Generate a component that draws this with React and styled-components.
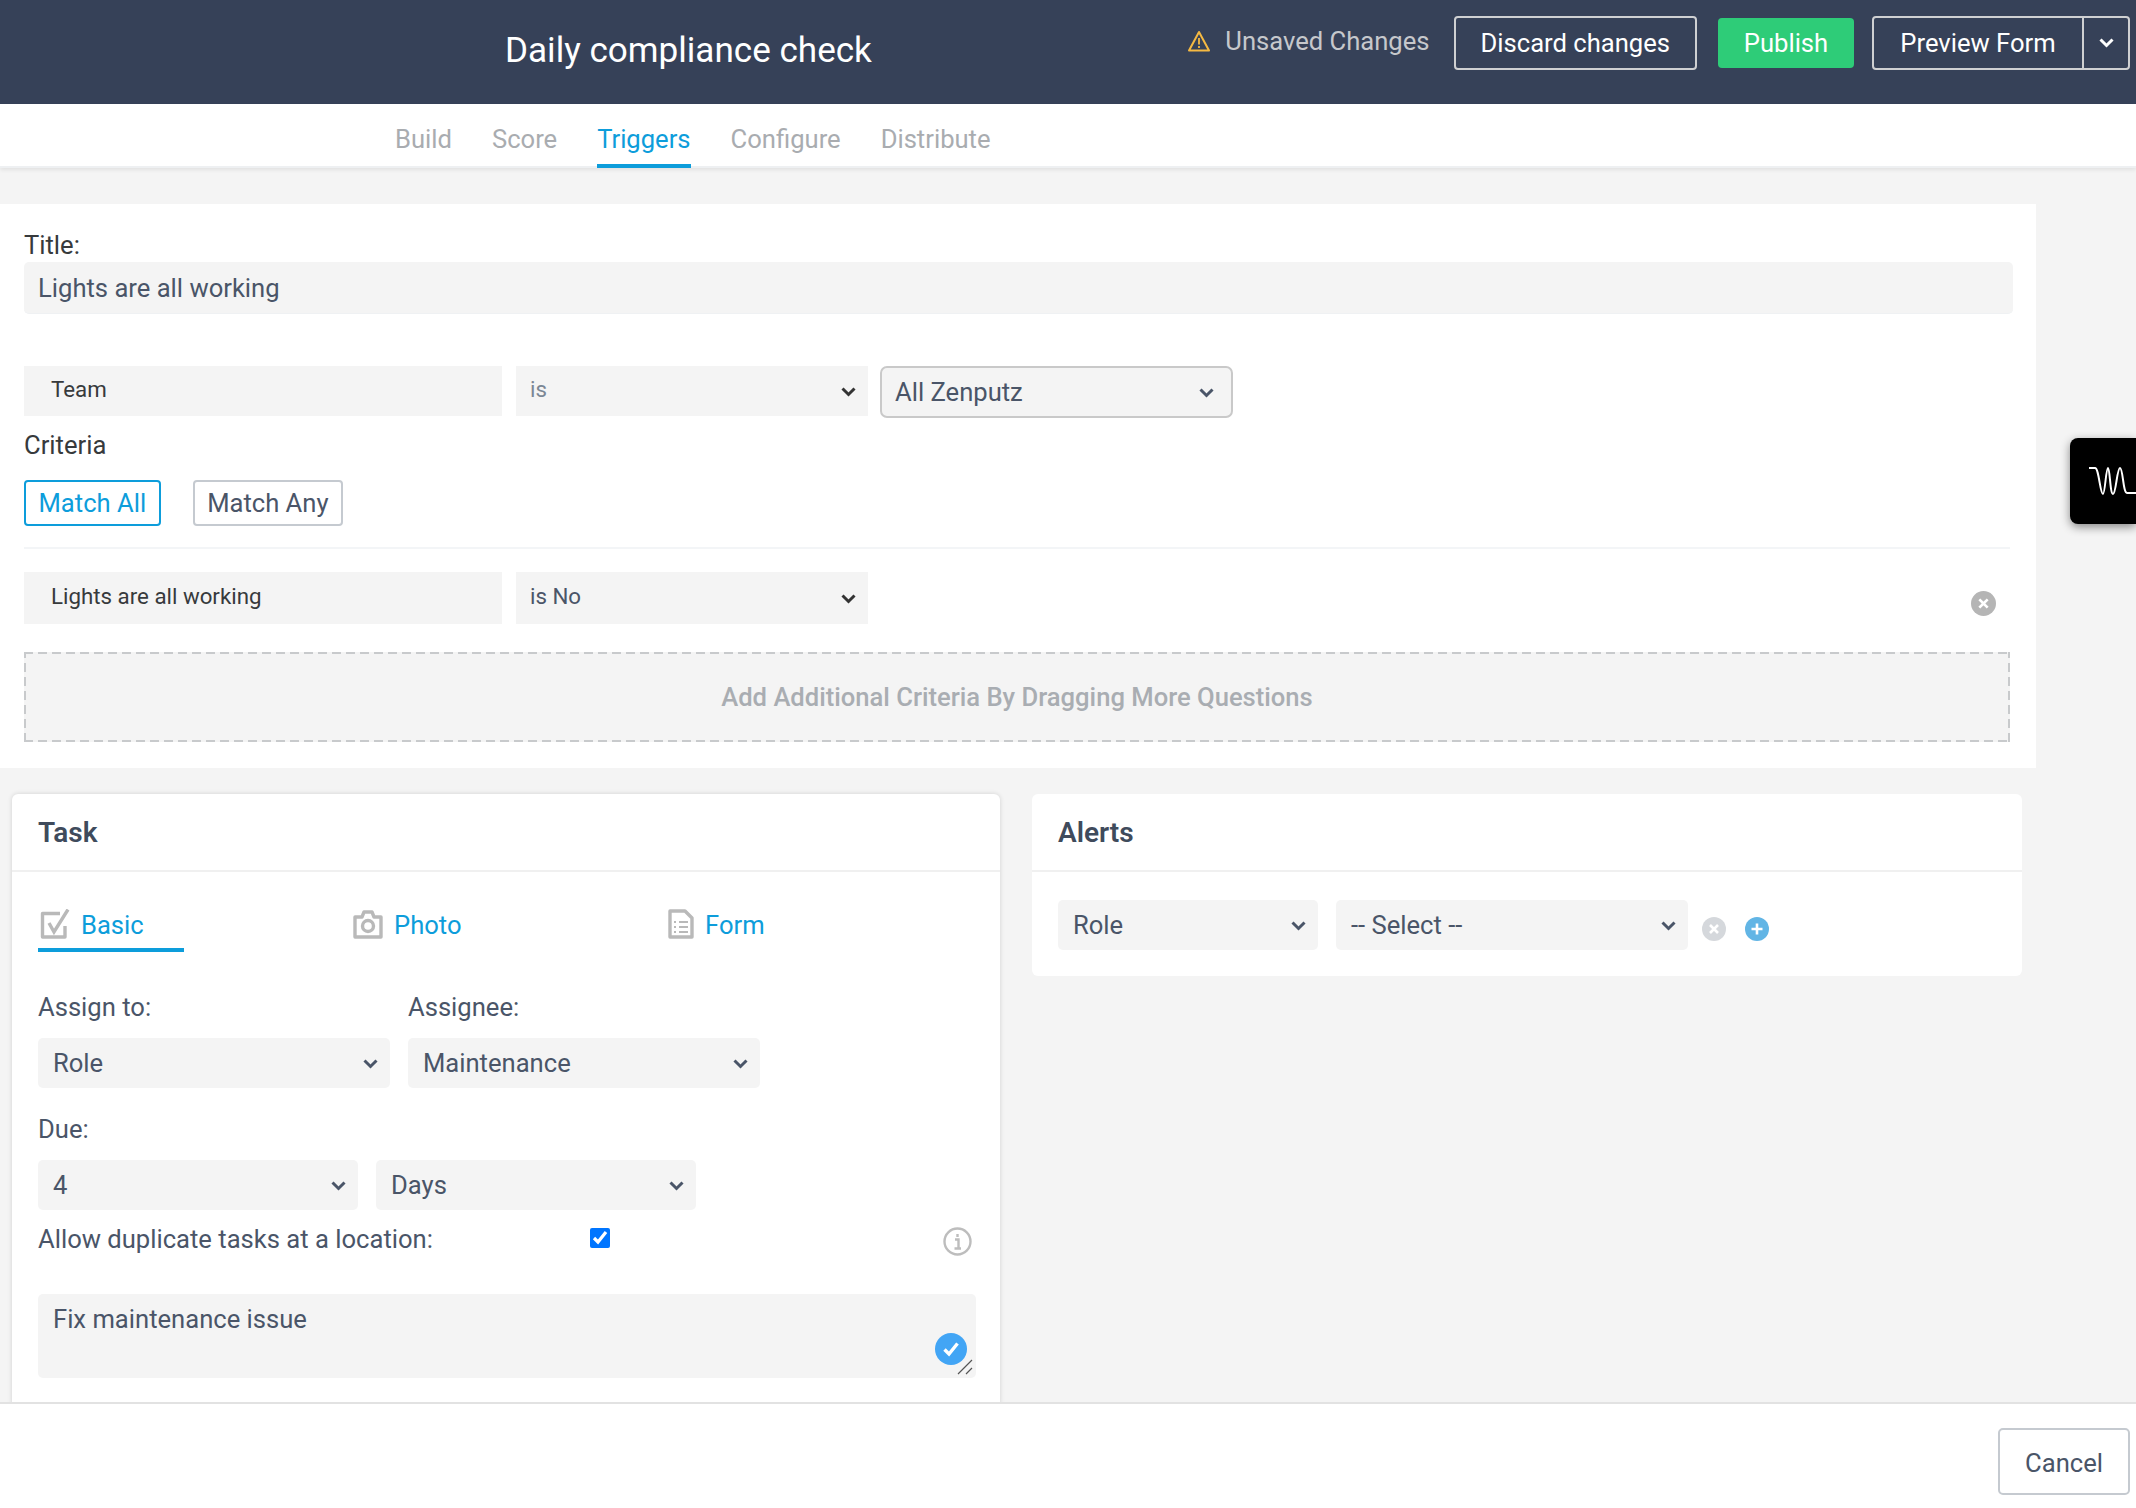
import React from "react";
import styled, { createGlobalStyle } from "styled-components";

const GlobalStyle = createGlobalStyle`
  html, body {
    margin: 0;
    padding: 0;
    background: #f4f4f4;
  }
  * {
    box-sizing: border-box;
  }
`;

const font = `Roboto, "Liberation Sans", sans-serif`;
const blue = "#0d9ddb";
const slate = "#4a5568";
const dash = "#c8cacc";

const Page = styled.div`
  position: relative;
  width: 2136px;
  height: 1508px;
  display: flex;
  flex-direction: column;
  overflow: hidden;
  background: #f4f4f4;
  font-family: ${font};
  font-size: 25.6px;
  color: ${slate};
`;

const Header = styled.header`
  flex: none;
  height: 104px;
  display: flex;
  align-items: flex-start;
  padding: 0 6px 0 505px;
  background: #364158;
`;

const FormName = styled.h1`
  margin: 0;
  font-size: 35.1px;
  font-weight: 400;
  line-height: 100px;
  color: #fff;
`;

const Actions = styled.div`
  margin: 16px 0 0 auto;
  display: flex;
  align-items: center;
  height: 54px;
`;

const Unsaved = styled.span`
  display: flex;
  align-items: center;
  gap: 15px;
  margin: 0 24px 0 0;
  color: #c6c8cc;
  line-height: 30px;
  padding-bottom: 4px;
`;

const GhostButton = styled.button`
  height: 54px;
  padding: 0 25px;
  margin: 0;
  border: 2px solid #cfd0d2;
  border-radius: 4px;
  background: transparent;
  color: #fff;
  font: inherit;
`;

const PublishButton = styled.button`
  height: 50px;
  width: 136px;
  margin: 0 18px 0 21px;
  border: 0;
  border-radius: 4px;
  background: #2ecc78;
  color: #fff;
  font: inherit;
`;

const SplitButton = styled.div`
  display: flex;
  height: 54px;
  border: 2px solid #cfd0d2;
  border-radius: 4px;
  color: #fff;
`;

const SplitLabel = styled.span`
  width: 210px;
  display: flex;
  align-items: center;
  justify-content: center;
  border-right: 2px solid #cfd0d2;
`;

const SplitCaret = styled.span`
  width: 44px;
  display: flex;
  align-items: center;
  justify-content: center;
`;

const TabBar = styled.nav`
  position: relative;
  z-index: 1;
  flex: none;
  height: 64px;
  display: flex;
  gap: 40px;
  padding-left: 395px;
  background: #fff;
  border-bottom: 2px solid #eef0f2;
  box-shadow: 0 2px 4px rgba(0, 0, 0, 0.08);
`;

const TopTab = styled.a`
  height: 64px;
  display: flex;
  align-items: center;
  color: ${(p) => (p.$active ? blue : "#a9acb0")};
  border-bottom: 4px solid ${(p) => (p.$active ? blue : "transparent")};
  padding-top: 10px;
`;

const Main = styled.main`
  flex: 1;
  min-height: 0;
  overflow: hidden;
  padding-top: 36px;
`;

const TriggerCard = styled.section`
  width: 2036px;
  padding: 26px 26px 26px 24px;
  background: #fff;
`;

const FieldLabel = styled.div`
  line-height: 30px;
  color: #373a3c;
`;

const TitleInput = styled.input`
  display: block;
  width: calc(100% + 3px);
  height: 52px;
  margin-top: 2px;
  padding: 0 14px;
  border: 0;
  border-bottom: 1px solid #eff1f3;
  border-radius: 5px;
  background: #f4f4f4;
  color: ${slate};
  font: inherit;
  outline: none;
`;

const ConditionRow = styled.div`
  display: flex;
  align-items: flex-start;
  gap: 14px;
  margin-top: ${(p) => p.$top || 0}px;
`;

const QuestionBox = styled.div`
  flex: none;
  width: 478px;
  height: ${(p) => p.$height}px;
  display: flex;
  align-items: center;
  padding: 0 0 4px 27px;
  background: #f4f4f4;
  color: #373a3c;
  font-size: 22.3px;
`;

const SelectWrap = styled.div`
  position: relative;
  flex: none;
  width: ${(p) => p.$width}px;
  height: ${(p) => p.$height || 50}px;
  margin-left: ${(p) => p.$left || 0}px;
`;

const Select = styled.select`
  appearance: none;
  display: block;
  width: 100%;
  height: 100%;
  padding: ${(p) =>
    p.$small ? "0 34px 4px 14px" : p.$outlined ? "0 34px 0 13px" : "0 34px 0 15px"};
  border: ${(p) => (p.$outlined ? "2px solid #c9c9c9" : "0")};
  border-radius: ${(p) => (p.$small ? "0" : p.$outlined ? "7px" : "5px")};
  background: #f4f4f4;
  color: ${(p) => p.$color || slate};
  font-family: ${font};
  font-size: ${(p) => (p.$small ? "22.3px" : "25.6px")};
  outline: none;
`;

const Caret = styled.svg`
  display: block;
  width: 15px;
  height: 10px;
  fill: none;
  stroke: ${(p) => p.$color || slate};
  stroke-width: 3;
`;

const SelectCaret = styled(Caret)`
  position: absolute;
  top: 50%;
  right: ${(p) => (p.$outlined ? 19 : 12)}px;
  margin-top: -4px;
  pointer-events: none;
`;

const MatchRow = styled.div`
  display: flex;
  gap: 32px;
  margin-top: 20px;
`;

const MatchButton = styled.button`
  height: 46px;
  padding: 0 12.5px;
  border: 2px solid ${(p) => (p.$active ? blue : "#c5cad0")};
  border-radius: 4px;
  background: #fff;
  color: ${(p) => (p.$active ? blue : slate)};
  font: inherit;
`;

const Separator = styled.hr`
  height: 2px;
  margin: 21px 0 0;
  border: 0;
  background: #f3f5f7;
`;

const RemoveSlot = styled.span`
  margin: 19px 14px 0 auto;
  display: flex;
`;

const DropZone = styled.div`
  height: 90px;
  margin-top: 28px;
  display: flex;
  align-items: center;
  justify-content: center;
  background-color: #f4f4f4;
  background-image:
    repeating-linear-gradient(90deg, ${dash} 0 9px, transparent 9px 14px),
    repeating-linear-gradient(90deg, ${dash} 0 9px, transparent 9px 14px),
    repeating-linear-gradient(0deg, ${dash} 0 9px, transparent 9px 14px),
    repeating-linear-gradient(0deg, ${dash} 0 9px, transparent 9px 14px);
  background-size: 100% 2px, 100% 2px, 2px 100%, 2px 100%;
  background-position: 0 0, 0 100%, 0 0, 100% 0;
  background-repeat: no-repeat;
  color: #a9adb2;
  font-size: 25.6px;
  font-weight: 500;
`;

const Columns = styled.div`
  display: flex;
  align-items: flex-start;
  gap: 32px;
  padding: 26px 0 0 12px;
`;

const Panel = styled.section`
  flex: none;
  width: ${(p) => p.$width}px;
  background: #fff;
  border-radius: 6px;
  box-shadow: ${(p) => (p.$raised ? "0 0 5px rgba(0, 0, 0, 0.14)" : "none")};
`;

const PanelHead = styled.h2`
  margin: 0;
  height: 78px;
  padding: 1px 26px 0;
  display: flex;
  align-items: center;
  border-bottom: 2px solid #f0f0f0;
  font-size: 28px;
  font-weight: 600;
  color: #3f4b5c;
`;

const TaskBody = styled.div`
  padding: 28px 24px 30px 26px;
`;

const TaskTabs = styled.div`
  display: grid;
  grid-template-columns: 315px 315px 1fr;
`;

const TaskTab = styled.a`
  display: flex;
  align-items: center;
  gap: 11px;
  width: ${(p) => (p.$active ? "146px" : "auto")};
  height: 52px;
  padding: 2px 0 0 ${(p) => p.$pad}px;
  color: ${blue};
  border-bottom: 4px solid ${(p) => (p.$active ? blue : "transparent")};
`;

const TabIcon = styled.svg`
  flex: none;
  width: ${(p) => p.$w}px;
  height: 30px;
  margin-top: -2px;
  fill: none;
  stroke: #b9b9b9;
  stroke-width: 3.4;
`;

const FieldGrid = styled.div`
  display: grid;
  grid-template-columns: ${(p) => p.$cols};
  column-gap: 18px;
  margin-top: ${(p) => p.$top}px;
`;

const SmallLabel = styled.label`
  display: block;
  line-height: 30px;
  margin-bottom: 16px;
`;

const AllowRow = styled.div`
  display: flex;
  align-items: center;
  height: 30px;
  margin-top: 14px;
  padding-right: 4px;
`;

const AllowLabel = styled.label`
  flex: none;
  width: 552px;
`;

const Tick = styled.input`
  width: 20px;
  height: 20px;
  margin: -3px 0 0;
`;

const InfoSlot = styled.span`
  display: flex;
  margin: 4px 0 0 auto;
`;

const NoteWrap = styled.div`
  position: relative;
  height: 84px;
  margin-top: 40px;
`;

const Note = styled.textarea`
  display: block;
  width: 100%;
  height: 100%;
  padding: 10px 15px;
  border: 0;
  border-radius: 5px;
  background: #f4f4f4;
  color: ${slate};
  font: inherit;
  line-height: 30px;
  outline: none;
  resize: none;
`;

const NoteCheck = styled.svg`
  position: absolute;
  right: 8px;
  bottom: 12px;
  width: 34px;
  height: 34px;
`;

const NoteGrip = styled.svg`
  position: absolute;
  right: 3px;
  bottom: 3px;
  width: 16px;
  height: 16px;
`;

const AlertRow = styled.div`
  display: flex;
  align-items: flex-start;
  gap: 18px;
  padding: 28px 26px 26px;
`;

const RoundButtons = styled.div`
  display: flex;
  gap: 19px;
  margin: 17px 0 0 -4px;
`;

const Footer = styled.footer`
  flex: none;
  height: 106px;
  display: flex;
  justify-content: flex-end;
  align-items: flex-start;
  padding: 24px 6px 0 0;
  background: #fff;
  border-top: 2px solid #e2e2e2;
`;

const CancelButton = styled.button`
  width: 132px;
  height: 67px;
  padding-top: 3px;
  border: 2px solid #c5cad0;
  border-radius: 5px;
  background: #fff;
  color: ${slate};
  font: inherit;
`;

const WaveTab = styled.aside`
  position: absolute;
  top: 438px;
  right: 0;
  width: 66px;
  height: 86px;
  padding: 28px 0 0 19px;
  overflow: hidden;
  background: #000;
  border-radius: 8px 0 0 8px;
  box-shadow: 0 3px 10px rgba(0, 0, 0, 0.45);
`;

const chevron = "M1.5 1.5 L7.5 7.5 L13.5 1.5";

const DropSelect = ({ value, width, height, color, caret, small, outlined, left }) => (
  <SelectWrap $width={width} $height={height} $left={left}>
    <Select defaultValue={value} $color={color} $small={small} $outlined={outlined}>
      <option>{value}</option>
    </Select>
    <SelectCaret viewBox="0 0 15 10" $color={caret} $outlined={outlined}>
      <path d={chevron} />
    </SelectCaret>
  </SelectWrap>
);

const CrossDot = ({ size, color }) => (
  <svg width={size} height={size} viewBox="0 0 24 24">
    <circle cx="12" cy="12" r="12" fill={color} />
    <path d="M8 8 L16 16 M16 8 L8 16" stroke="#fff" strokeWidth="2.6" />
  </svg>
);

const App = () => (
  <Page>
    <GlobalStyle />
    <Header>
      <FormName>Daily compliance check</FormName>
      <Actions>
        <Unsaved>
          <svg width="22" height="22" viewBox="0 0 22 22" fill="none">
            <path
              d="M11 2 L21 20.5 H1 Z"
              stroke="#f5b942"
              strokeWidth="2"
              strokeLinejoin="round"
            />
            <path d="M11 8 V14.5 M11 16 V18" stroke="#f5b942" strokeWidth="1.8" />
          </svg>
          Unsaved Changes
        </Unsaved>
        <GhostButton>Discard changes</GhostButton>
        <PublishButton>Publish</PublishButton>
        <SplitButton>
          <SplitLabel>Preview Form</SplitLabel>
          <SplitCaret>
            <Caret viewBox="0 0 15 10" $color="#fff">
              <path d={chevron} />
            </Caret>
          </SplitCaret>
        </SplitButton>
      </Actions>
    </Header>

    <TabBar>
      <TopTab>Build</TopTab>
      <TopTab>Score</TopTab>
      <TopTab $active>Triggers</TopTab>
      <TopTab>Configure</TopTab>
      <TopTab>Distribute</TopTab>
    </TabBar>

    <Main>
      <TriggerCard>
        <FieldLabel>Title:</FieldLabel>
        <TitleInput defaultValue="Lights are all working" />

        <ConditionRow $top={52}>
          <QuestionBox $height={50}>Team</QuestionBox>
          <DropSelect value="is" width={352} color="#7b8794" caret="#333" small />
          <DropSelect value="All Zenputz" width={353} height={52} left={-2} outlined />
        </ConditionRow>

        <FieldLabel style={{ marginTop: 12 }}>Criteria</FieldLabel>
        <MatchRow>
          <MatchButton $active>Match All</MatchButton>
          <MatchButton>Match Any</MatchButton>
        </MatchRow>
        <Separator />

        <ConditionRow $top={23}>
          <QuestionBox $height={52}>Lights are all working</QuestionBox>
          <DropSelect value="is No" width={352} height={52} caret="#333" small />
          <RemoveSlot>
            <CrossDot size={25} color="#b5b5b5" />
          </RemoveSlot>
        </ConditionRow>

        <DropZone>Add Additional Criteria By Dragging More Questions</DropZone>
      </TriggerCard>

      <Columns>
        <Panel $width={988} $raised>
          <PanelHead>Task</PanelHead>
          <TaskBody>
            <TaskTabs>
              <TaskTab $active $pad={2}>
                <TabIcon viewBox="0 0 30 30" $w={30}>
                  <path d="M20 4.5 H2.5 V28 H25 V17" strokeLinejoin="round" />
                  <path d="M9 14 L14 23 L28 0.5" />
                </TabIcon>
                Basic
              </TaskTab>
              <TaskTab $pad={0}>
                <TabIcon viewBox="0 0 30 30" $w={30}>
                  <path d="M2 8 H9 L11 3 H19 L21 8 H28 V28 H2 Z" strokeLinejoin="round" />
                  <circle cx="15" cy="17" r="5.5" />
                </TabIcon>
                Photo
              </TaskTab>
              <TaskTab $pad={0}>
                <TabIcon viewBox="0 0 26 30" $w={26}>
                  <path d="M2 2 H17 L24 9 V28 H2 Z" strokeLinejoin="round" />
                  <path
                    d="M6 13 H8 M11 13 H20 M6 18 H8 M11 18 H20 M6 23 H8 M11 23 H20"
                    strokeWidth="2.2"
                  />
                </TabIcon>
                Form
              </TaskTab>
            </TaskTabs>

            <FieldGrid $cols="352px 352px" $top={40}>
              <div>
                <SmallLabel>Assign to:</SmallLabel>
                <DropSelect value="Role" width={352} />
              </div>
              <div>
                <SmallLabel>Assignee:</SmallLabel>
                <DropSelect value="Maintenance" width={352} />
              </div>
            </FieldGrid>

            <FieldGrid $cols="320px 320px" $top={26}>
              <SmallLabel style={{ gridColumn: "1 / 3" }}>Due:</SmallLabel>
              <DropSelect value="4" width={320} />
              <DropSelect value="Days" width={320} />
            </FieldGrid>

            <AllowRow>
              <AllowLabel>Allow duplicate tasks at a location:</AllowLabel>
              <Tick type="checkbox" defaultChecked />
              <InfoSlot>
                <svg width="29" height="29" viewBox="0 0 29 29" fill="none">
                  <circle cx="14.5" cy="14.5" r="13" stroke="#bdbdbd" strokeWidth="2.4" />
                  <path
                    d="M12 12.5 H15.5 V21 M11.5 21.5 H18 M14.5 7 V10"
                    stroke="#bdbdbd"
                    strokeWidth="2.4"
                  />
                </svg>
              </InfoSlot>
            </AllowRow>

            <NoteWrap>
              <Note defaultValue="Fix maintenance issue" />
              <NoteCheck viewBox="0 0 34 34">
                <circle cx="17" cy="17" r="16" fill="#42a5f5" />
                <path
                  d="M10.5 17.5 L15 22 L23.5 11.5"
                  fill="none"
                  stroke="#fff"
                  strokeWidth="3.4"
                />
              </NoteCheck>
              <NoteGrip viewBox="0 0 16 16">
                <path d="M1 15 L15 1 M9 15 L15 9" stroke="#555" strokeWidth="1.2" />
              </NoteGrip>
            </NoteWrap>
          </TaskBody>
        </Panel>

        <Panel $width={990}>
          <PanelHead>Alerts</PanelHead>
          <AlertRow>
            <DropSelect value="Role" width={260} />
            <DropSelect value="-- Select --" width={352} />
            <RoundButtons>
              <CrossDot size={24} color="#d5d8dc" />
              <svg width="24" height="24" viewBox="0 0 24 24">
                <circle cx="12" cy="12" r="12" fill="#62b5e5" />
                <path d="M12 6.5 V17.5 M6.5 12 H17.5" stroke="#fff" strokeWidth="2.6" />
              </svg>
            </RoundButtons>
          </AlertRow>
        </Panel>
      </Columns>
    </Main>

    <Footer>
      <CancelButton>Cancel</CancelButton>
    </Footer>

    <WaveTab>
      <svg width="48" height="32" viewBox="0 0 48 32" fill="none">
        <path
          d="M0 2 H6 C10 2 11 28 14 28 C16 28 17 2 19 2 C21 2 21 28 24 28 C27 28 28 2 31 2 C34 2 34 27 38 27 H48"
          stroke="#fff"
          strokeWidth="2"
        />
      </svg>
    </WaveTab>
  </Page>
);

export default App;
